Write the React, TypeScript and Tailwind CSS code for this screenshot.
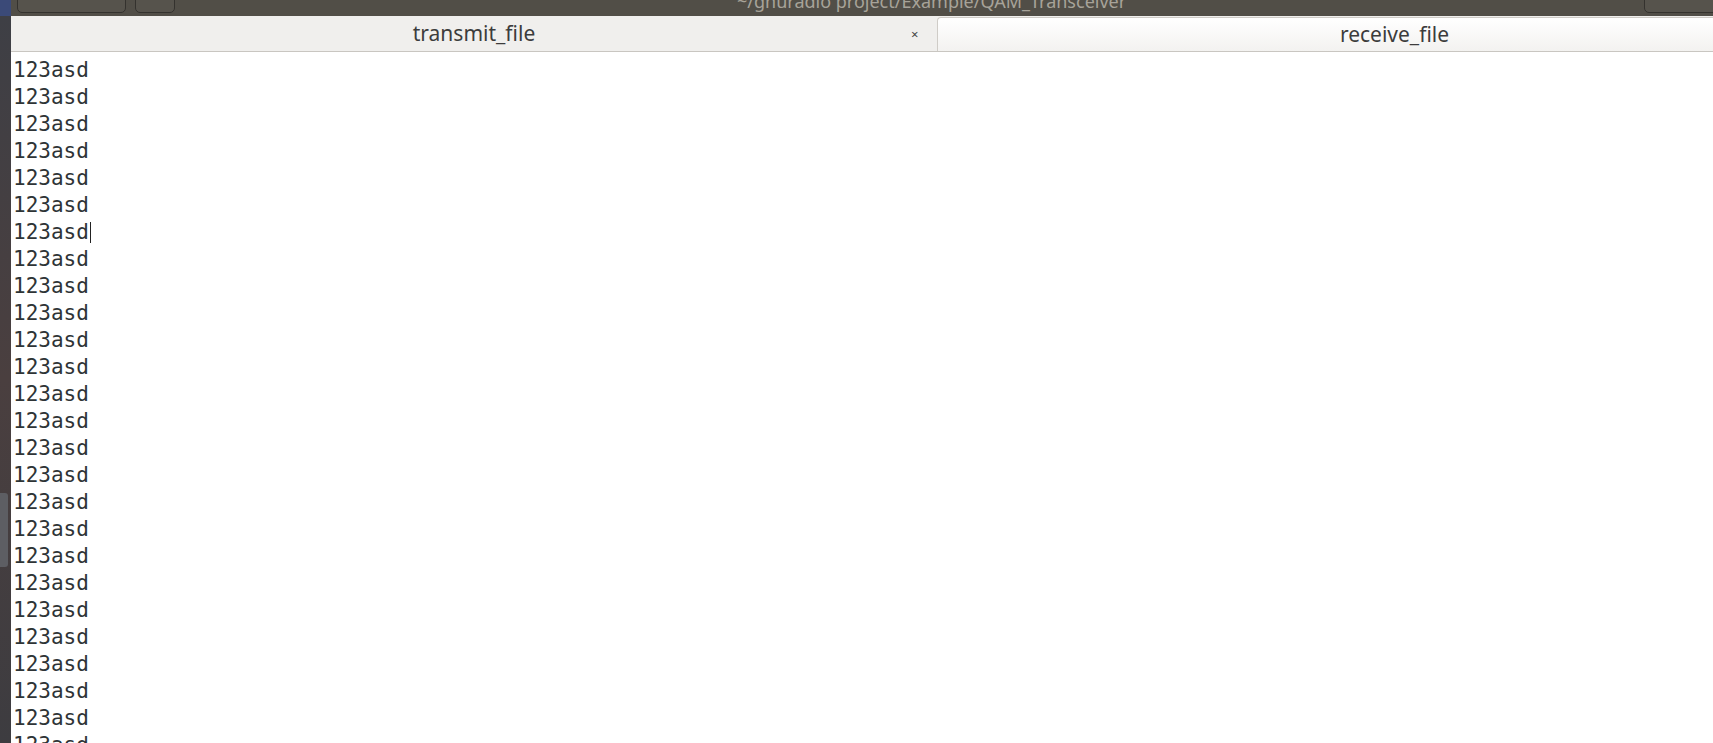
import React from "react";

export default function App() {
  const lines = Array.from({ length: 26 }, (_, i) => i);
  return (
    <div className="w-[1713px] h-[743px] overflow-hidden flex bg-white">
      <div className="w-[11px] h-full flex flex-col shrink-0">
        <div className="h-[16px] bg-[#3b4a78]" />
        <div className="flex-1 bg-gradient-to-b from-[#3e3f45] via-[#4a3f3f] to-[#3d3c40] flex flex-col">
          <div className="h-[477px]" />
          <div className="h-[74px] w-[8px] rounded-r-[3px] bg-[#5d5e63]" />
        </div>
      </div>
      <div className="flex-1 flex flex-col min-w-0">
        <div className="h-[16px] bg-[#514e47] relative overflow-hidden shrink-0">
          <div className="absolute left-[6px] top-[-20px] w-[109px] h-[33px] rounded-[5px] border border-[#34322e] bg-[#56534c]" />
          <div className="absolute left-[124px] top-[-20px] w-[40px] h-[33px] rounded-[5px] border border-[#34322e] bg-[#56534c]" />
          <div className="absolute left-[1633px] top-[-20px] w-[80px] h-[33px] rounded-[5px] border border-[#34322e] bg-[#56534c]" />
          <div
            className="absolute left-[726px] top-[-10px] whitespace-nowrap text-[18px] leading-[22px] text-[#a7a399]"
            style={{ fontFamily: '"Noto Sans", "Open Sans", sans-serif' }}
          >
            ~/gnuradio project/Example/QAM_Transceiver
          </div>
        </div>
        <div
          className="h-[36px] flex bg-[#f0efed] border-b border-[#c9c6c1] shrink-0 text-[#3c3c3c] overflow-hidden"
          style={{ fontFamily: '"Noto Sans", "Open Sans", sans-serif' }}
        >
          <div className="w-[926px] shrink-0 relative flex items-center justify-center text-[21px]">
            <span className="mt-[1px]">transmit_file</span>
            <span className="absolute left-[900px] top-[9px] text-[13px] text-[#444]">×</span>
          </div>
          <div className="w-[914px] shrink-0 mt-[1px] rounded-tl-[4px] border-l border-t border-[#cfccc7] bg-gradient-to-b from-white to-[#f3f2f0] flex items-center justify-center text-[21px]">
            <span>receive_file</span>
          </div>
        </div>
        <div
          className="flex-1 pt-[5px] pl-[2px] text-[21px] leading-[27px] text-[#2e3436]"
          style={{ fontFamily: '"DejaVu Sans Mono", monospace' }}
        >
          {lines.map((i) => (
            <div key={i} className="flex items-center">
              <span>123asd</span>
              {i === 6 && <span className="w-[1px] h-[21px] bg-[#222] ml-[1px]" />}
            </div>
          ))}
        </div>
      </div>
    </div>
  );
}
